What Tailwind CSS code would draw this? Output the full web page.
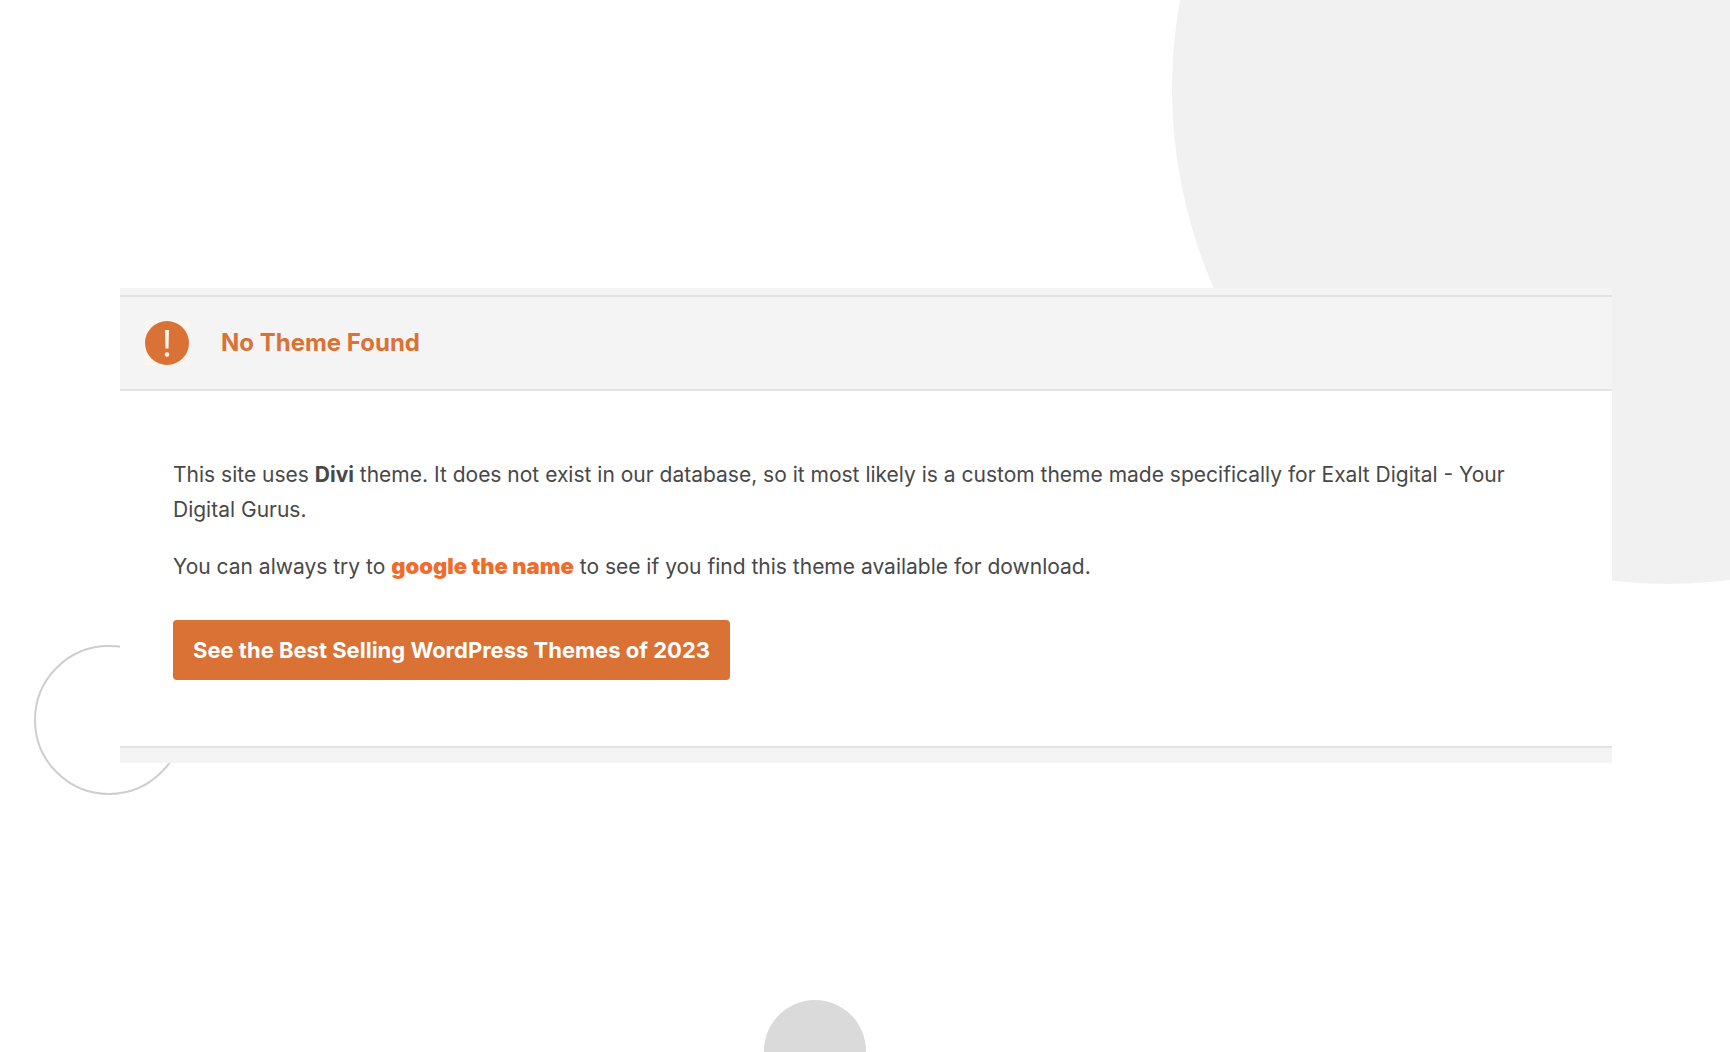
<!DOCTYPE html>
<html lang="en">
<head>
  <meta charset="UTF-8" />
  <meta name="viewport" content="width=device-width, initial-scale=1.0" />
  <script src="https://cdn.jsdelivr.net/npm/@tailwindcss/browser@4"></script>
  <title>No Theme Found</title>
</head>
<body class="bg-white font-['Inter','Liberation_Sans',sans-serif]">
  <div class="relative min-h-screen overflow-hidden pt-[288px] pl-[120px] pr-[118px]">
    <!-- background circles -->
    <div class="absolute -top-[406px] -right-[432px] size-[990px] rounded-full bg-[#f1f1f1]"></div>
    <div class="absolute top-[645px] left-[34px] size-[150px] rounded-full border-2 border-[#cecece]"></div>
    <div class="absolute -bottom-[50px] left-[764px] size-[102px] rounded-full bg-[#dadada]"></div>

    <main class="relative bg-[#f4f4f4] pt-[7px] pb-[15px]">
      <header class="flex items-center gap-8 border-y-2 border-[#e3e3e3] px-[25px] py-6">
        <div class="bg-[#fff5f0]">
          <svg class="size-11" viewBox="0 0 44 44" aria-hidden="true">
            <circle cx="22" cy="22" r="22" fill="#da7135" />
            <path d="M20 9h4l-.5 18.500h-3z" fill="#fff5f0" />
            <circle cx="22" cy="33.500" r="2.300" fill="#fff5f0" />
          </svg>
        </div>
        <h1 class="text-[24px] leading-[44px] font-bold text-[#da7135]">No Theme Found</h1>
      </header>

      <section class="border-b-2 border-[#e3e3e3] bg-white px-[53px] py-[66px] text-[21px] leading-[35px] text-[#484848]">
        <p>This site uses <strong class="font-bold">Divi</strong> theme. It does not exist in our database, so it most likely is a custom theme made specifically for Exalt Digital - Your Digital Gurus.</p>
        <p class="mt-[22px]">You can always try to <a href="#" class="text-[22px] font-black text-[#ef6c2d]">google the name</a> to see if you find this theme available for download.</p>
        <a href="#" class="mt-[36px] flex h-[60px] w-fit items-center rounded px-5 text-[22px] font-bold text-white bg-[#da7135]">See the Best Selling WordPress Themes of 2023</a>
      </section>
    </main>
  </div>
</body>
</html>
